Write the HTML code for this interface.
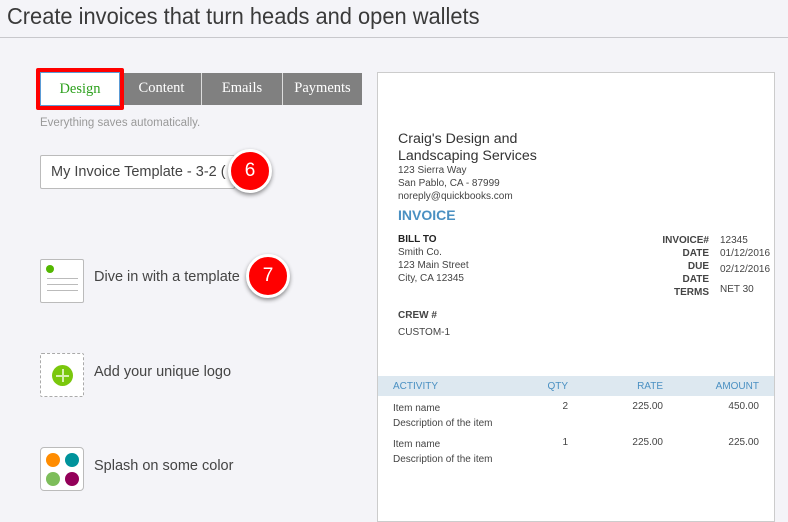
<!DOCTYPE html>
<html><head><meta charset="utf-8"><style>
*{margin:0;padding:0;box-sizing:border-box}
body{width:788px;height:516px;overflow:hidden;background:#f4f4f8;font-family:"Liberation Sans",sans-serif;position:relative}
.a{position:absolute;white-space:nowrap}
.title{left:7px;top:3px;font-size:23px;color:#3a3a3a;transform:scaleX(0.95);transform-origin:0 0}
.hr{left:0;top:37px;width:788px;height:1px;background:#c8c8cc}
.tabs{left:40px;top:73px;width:322px;height:32px;background:#808080}
.tab{position:absolute;top:0;height:32px;line-height:31px;text-align:center;color:#fff;font-family:"Liberation Serif",serif;font-size:14.5px}
.badge{position:absolute;width:44px;height:44px;border-radius:50%;background:#f00;border:3px solid #fff;box-shadow:0 2px 4px rgba(0,0,0,.45);color:#fff;font-size:19px;text-align:center;line-height:38px}
.lbl{font-size:14.5px;color:#444}
.icon{position:absolute;left:40px;width:44px;height:44px;background:#fff;border:1px solid #bbb;border-radius:2px}
.inv{left:377px;top:72px;width:398px;height:450px;background:#fff;border:1px solid #ccc}
.s{font-size:10px;color:#444}
.b{font-size:10px;color:#222;font-weight:bold}
</style></head><body>
<div class="a title">Create invoices that turn heads and open wallets</div>
<div class="a hr"></div>

<div class="a tabs">
 <div class="tab" style="left:82px;width:79px">Content</div>
 <div style="position:absolute;left:161px;top:0;width:1px;height:32px;background:#ddd"></div>
 <div class="tab" style="left:162px;width:80px">Emails</div>
 <div style="position:absolute;left:242px;top:0;width:1px;height:32px;background:#ddd"></div>
 <div class="tab" style="left:243px;width:79px">Payments</div>
</div>
<div class="a" style="left:36px;top:68px;width:88px;height:42px;border:4px solid #f00;border-radius:2px;background:#fff">
 <div style="position:absolute;left:0;top:0;width:80px;height:34px;border:1px solid #5b9bd5;text-align:center;line-height:32px;color:#2ca01c;font-family:'Liberation Serif',serif;font-size:14.5px">Design</div>
</div>
<div class="a" style="left:40px;top:117px;font-size:11.5px;color:#999">Everything saves automatically.</div>

<div class="a" style="left:40px;top:155px;width:195px;height:34px;background:#fff;border:1px solid #bbb;border-radius:2px;font-size:14.5px;color:#444;line-height:32px;padding-left:10px;overflow:hidden">My Invoice Template - 3-2 (</div>
<div class="badge" style="left:228px;top:149px">6</div>

<div class="icon" style="top:259px">
 <div style="position:absolute;left:5px;top:5px;width:8px;height:8px;border-radius:50%;background:#53b700"></div>
 <div style="position:absolute;left:6px;top:18px;width:31px;height:1px;background:#bbb"></div>
 <div style="position:absolute;left:6px;top:24px;width:31px;height:1px;background:#bbb"></div>
 <div style="position:absolute;left:6px;top:30px;width:31px;height:1px;background:#bbb"></div>
</div>
<div class="a lbl" style="left:94px;top:269px">Dive in with a template</div>
<div class="badge" style="left:246px;top:254px">7</div>

<div class="icon" style="top:353px;border:1px dashed #aaa">
 <div style="position:absolute;left:11px;top:11px;width:21px;height:21px;border-radius:50%;background:#7ac70c"></div>
 <div style="position:absolute;left:15px;top:21px;width:13px;height:1.5px;background:#d8f0b0"></div>
 <div style="position:absolute;left:21px;top:15px;width:1.5px;height:13px;background:#d8f0b0"></div>
</div>
<div class="a lbl" style="left:94px;top:364px">Add your unique logo</div>

<div class="icon" style="top:447px;border-radius:4px">
 <div style="position:absolute;left:5px;top:5px;width:14px;height:14px;border-radius:50%;background:#ff8c00"></div>
 <div style="position:absolute;left:24px;top:5px;width:14px;height:14px;border-radius:50%;background:#00939b"></div>
 <div style="position:absolute;left:5px;top:24px;width:14px;height:14px;border-radius:50%;background:#7dbd5a"></div>
 <div style="position:absolute;left:24px;top:24px;width:14px;height:14px;border-radius:50%;background:#930059"></div>
</div>
<div class="a lbl" style="left:94px;top:458px">Splash on some color</div>

<div class="a inv"></div>
<div class="a" style="left:398px;top:131px;font-size:14.2px;color:#333;line-height:17px">Craig's Design and<br>Landscaping Services</div>
<div class="a s" style="left:398px;top:164px;line-height:13px">123 Sierra Way<br>San Pablo, CA - 87999<br>noreply@quickbooks.com</div>
<div class="a" style="left:398px;top:207px;font-size:14px;font-weight:bold;color:#4a90c2">INVOICE</div>
<div class="a b" style="left:398px;top:234px">BILL TO</div>
<div class="a s" style="left:398px;top:246px;line-height:13px">Smith Co.<br>123 Main Street<br>City, CA 12345</div>
<div class="a b" style="left:609px;top:234px;width:100px;text-align:right;color:#444;line-height:13px">INVOICE#<br>DATE<br>DUE<br>DATE<br>TERMS</div>
<div class="a s" style="left:720px;top:234px;line-height:13px">12345<br>01/12/2016</div>
<div class="a s" style="left:720px;top:264px">02/12/2016</div>
<div class="a s" style="left:720px;top:284px">NET 30</div>
<div class="a b" style="left:398px;top:310px;color:#444">CREW #</div>
<div class="a s" style="left:398px;top:327px">CUSTOM-1</div>

<div class="a" style="left:378px;top:376px;width:396px;height:20px;background:#dde8f0"></div>
<div class="a b" style="left:393px;top:381px;color:#4a90c2;font-weight:normal">ACTIVITY</div>
<div class="a b" style="left:500px;width:68px;text-align:right;top:381px;color:#4a90c2;font-weight:normal">QTY</div>
<div class="a b" style="left:590px;width:73px;text-align:right;top:381px;color:#4a90c2;font-weight:normal">RATE</div>
<div class="a b" style="left:680px;width:79px;text-align:right;top:381px;color:#4a90c2;font-weight:normal">AMOUNT</div>

<div class="a s" style="left:393px;top:401px;line-height:15px">Item name<br>Description of the item</div>
<div class="a s" style="left:500px;width:68px;text-align:right;top:401px">2</div>
<div class="a s" style="left:590px;width:73px;text-align:right;top:401px">225.00</div>
<div class="a s" style="left:680px;width:79px;text-align:right;top:401px">450.00</div>
<div class="a s" style="left:393px;top:437px;line-height:15px">Item name<br>Description of the item</div>
<div class="a s" style="left:500px;width:68px;text-align:right;top:437px">1</div>
<div class="a s" style="left:590px;width:73px;text-align:right;top:437px">225.00</div>
<div class="a s" style="left:680px;width:79px;text-align:right;top:437px">225.00</div>
</body></html>
